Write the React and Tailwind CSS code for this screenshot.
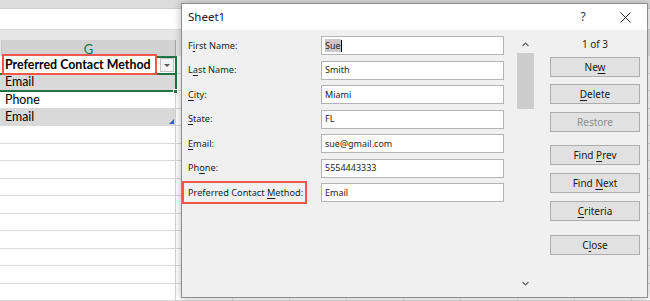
import React from "react";

const U = ({ children }) => (
  <span className="underline underline-offset-[1.5px] decoration-[0.8px]">{children}</span>
);

const fields = [
  { label: <>F<U>i</U>rst Name:</>, value: "Sue", sel: true },
  { label: <>L<U>a</U>st Name:</>, value: "Smith" },
  { label: <><U>C</U>ity:</>, value: "Miami" },
  { label: <><U>S</U>tate:</>, value: "FL" },
  { label: <><U>E</U>mail:</>, value: "sue@gmail.com" },
  { label: <>Ph<U>o</U>ne:</>, value: "5554443333" },
  { label: <>Preferred Contact <U>M</U>ethod:</>, value: "Email", boxed: true },
];

const extraCols = [0, 1, 2, 3, 4, 5, 6, 7];

function SheetRow({ children, gray, bold, h = "h-[17.5px]" }) {
  return (
    <div className={`flex ${h} border-b border-[#d9d9d9]`}>
      <div
        className={`relative w-[176px] shrink-0 border-r border-[#d4d4d4] flex items-center pl-[5px] pt-[2px] ${
          gray ? "bg-[#d9d9d9]" : "bg-white"
        } ${bold ? "font-bold text-[12.4px]" : "text-[12.4px]"} text-black`}
      >
        {children}
      </div>
      {extraCols.map((c) => (
        <div key={c} className="w-[57px] shrink-0 border-r border-[#dcdcdc] bg-white" />
      ))}
    </div>
  );
}

function Btn({ children, disabled, className = "" }) {
  return (
    <div
      className={`h-[20px] w-[90px] bg-[#e1e1e1] border border-[#adadad] flex items-center justify-center text-[10px] ${
        disabled ? "text-[#8d8d8d]" : "text-[#1b1b1b]"
      } ${className}`}
    >
      <span className="whitespace-pre">{children}</span>
    </div>
  );
}

export default function App() {
  return (
    <div className="relative w-[650px] h-[301px] overflow-hidden bg-white font-['Lato',sans-serif]">
      {/* Spreadsheet background */}
      <div className="flex flex-col">
        <div className="h-[9px] bg-[#dcdcdc] border-b border-[#cfcfcf]" />
        <div className="h-[21px] bg-white border-b border-[#dadada]" />
        <div className="h-[10px] bg-[#e6e6e6]" />
        <div className="flex h-[16px] bg-[#e6e6e6]">
          <div className="w-[2px] shrink-0 border-r border-[#c8c8c8]" />
          <div className="w-[174px] shrink-0 bg-[#d2d2d2] border-r border-[#a9a9a9] flex items-center justify-center text-[13px] text-[#217346] leading-none pt-[2px]">
            G
          </div>
          {extraCols.map((c) => (
            <div key={c} className="w-[57px] shrink-0 border-r border-[#c8c8c8]" />
          ))}
        </div>
        <div className="relative">
          <SheetRow bold>
            <span>Preferred Contact Method</span>
            <div className="absolute right-[1px] top-[2px] w-[14px] h-[14px] bg-[#f3f3f3] border border-[#c3c3c3] flex items-center justify-center">
              <div className="w-0 h-0 border-l-[3px] border-r-[3px] border-t-[3px] border-l-transparent border-r-transparent border-t-[#5a5a5a]" />
            </div>
          </SheetRow>
          <SheetRow gray><span>Email</span></SheetRow>
          <SheetRow><span>Phone</span></SheetRow>
          <SheetRow gray>
            <span>Email</span>
            <div className="absolute right-[1px] bottom-[1px] w-0 h-0 border-l-[5px] border-b-[5px] border-l-transparent border-b-[#3b5fc4]" />
          </SheetRow>
          {Array.from({ length: 10 }).map((_, i) => (
            <SheetRow key={i} />
          ))}

          {/* green selection */}
          <div className="absolute left-[157px] top-0 w-[20px] h-[2px] bg-[#217346]" />
          <div className="absolute left-[175px] top-0 w-[2px] h-[36px] bg-[#217346]" />
          <div className="absolute left-0 top-[17px] w-[177px] h-[2px] bg-[#217346]" />
          <div className="absolute left-0 top-[34px] w-[177px] h-[2px] bg-[#217346]" />
          <div className="absolute left-[173px] top-[33px] w-[5px] h-[5px] bg-[#217346] border border-white" />

          {/* red annotation box */}
          <div className="absolute left-[2px] -top-[2px] w-[155px] h-[21px] border-[2px] border-[#f4574a]" />
        </div>
      </div>

      {/* Data form dialog */}
      <div className="absolute left-[181px] top-[3px] w-[467px] h-[295px] border border-[#8e8e8e] bg-[#f0f0f0] shadow-[0_0_8px_rgba(0,0,0,0.28)] flex flex-col font-['Noto_Sans',sans-serif] text-[#1e1e1e]">
        {/* title bar */}
        <div className="h-[26px] shrink-0 bg-white flex items-center justify-between">
          <span className="pl-[6px] text-[11.5px] text-[#1a1a1a]">Sheet1</span>
          <div className="flex items-center">
            <span className="w-[20px] text-center text-[12px] text-[#333] mr-[10px]">?</span>
            <div className="w-[44px] flex items-center justify-center">
              <svg width="11" height="11" viewBox="0 0 11 11">
                <path d="M0.5 0.5 L10.5 10.5 M10.5 0.5 L0.5 10.5" stroke="#2a2a2a" strokeWidth="1" />
              </svg>
            </div>
          </div>
        </div>

        {/* body */}
        <div className="flex-1 flex">
          {/* form */}
          <div className="flex flex-col gap-[5.5px] pt-[6px]">
            {fields.map((f, i) => (
              <div key={i} className="flex items-center h-[19px]">
                <div className="w-[139px] shrink-0 text-[9.2px]">
                  {f.boxed ? (
                    <div className="-my-[2px] w-[125px] h-[23px] border-[2px] border-[#f4574a] flex items-center pl-[4px] whitespace-nowrap">
                      <span className="whitespace-pre">{f.label}</span>
                    </div>
                  ) : (
                    <div className="pl-[6px] whitespace-nowrap">{f.label}</div>
                  )}
                </div>
                <div className="w-[183px] h-[19px] bg-white border border-[#b4b4b4] flex items-center pl-[3px] text-[9px] text-[#1e1e1e]">
                  {f.sel ? (
                    <>
                      <span className="bg-[#c9c9c9]">{f.value}</span>
                      <span className="w-[1px] h-[12px] bg-black" />
                    </>
                  ) : (
                    <span>{f.value}</span>
                  )}
                </div>
              </div>
            ))}
          </div>

          {/* scrollbar */}
          <div className="ml-[13px] w-[17px] pt-[6px] pb-[5px] flex flex-col">
            <div className="h-[17px] flex items-center justify-center">
              <svg width="7" height="5" viewBox="0 0 7 5">
                <path d="M0.5 4 L3.5 1 L6.5 4" stroke="#606060" strokeWidth="1.1" fill="none" />
              </svg>
            </div>
            <div className="h-[56px] bg-[#cdcdcd]" />
            <div className="flex-1" />
            <div className="h-[17px] flex items-center justify-center">
              <svg width="7" height="5" viewBox="0 0 7 5">
                <path d="M0.5 1 L3.5 4 L6.5 1" stroke="#606060" strokeWidth="1.1" fill="none" />
              </svg>
            </div>
          </div>

          {/* buttons */}
          <div className="ml-[16px] w-[90px] pt-[6px] flex flex-col">
            <div className="h-[16px] flex items-center justify-center text-[10px]">1 of 3</div>
            <Btn className="mt-[5px]">Ne<U>w</U></Btn>
            <Btn className="mt-[7px]"><U>D</U>elete</Btn>
            <Btn className="mt-[8px]" disabled>Restore</Btn>
            <Btn className="mt-[13px]">Find <U>P</U>rev</Btn>
            <Btn className="mt-[8px]">Find <U>N</U>ext</Btn>
            <Btn className="mt-[8px]"><U>C</U>riteria</Btn>
            <Btn className="mt-[14px]">C<U>l</U>ose</Btn>
          </div>
        </div>
      </div>
    </div>
  );
}
